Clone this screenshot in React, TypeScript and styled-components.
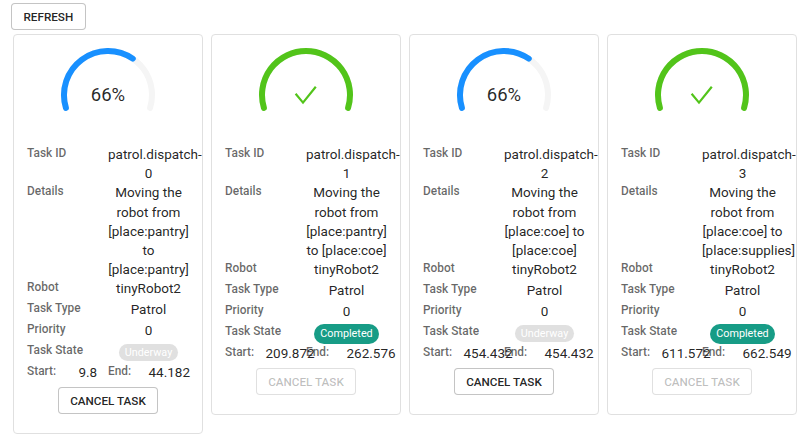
import styled, { createGlobalStyle } from "styled-components";

const GlobalStyle = createGlobalStyle`
  body {
    margin: 0;
    background: #fff;
    font-family: Roboto, "Liberation Sans", sans-serif;
  }
`;

const tasks = [
  {
    id: "patrol.dispatch-0",
    details: "Moving the robot from [place:pantry] to [place:pantry]",
    robot: "tinyRobot2",
    type: "Patrol",
    priority: 0,
    state: "Underway",
    progress: 66,
    start: "9.8",
    end: "44.182",
  },
  {
    id: "patrol.dispatch-1",
    details: "Moving the robot from [place:pantry] to [place:coe]",
    robot: "tinyRobot2",
    type: "Patrol",
    priority: 0,
    state: "Completed",
    progress: 100,
    start: "209.872",
    end: "262.576",
  },
  {
    id: "patrol.dispatch-2",
    details: "Moving the robot from [place:coe] to [place:coe]",
    robot: "tinyRobot2",
    type: "Patrol",
    priority: 0,
    state: "Underway",
    progress: 66,
    start: "454.432",
    end: "454.432",
  },
  {
    id: "patrol.dispatch-3",
    details: "Moving the robot from [place:coe] to [place:supplies]",
    robot: "tinyRobot2",
    type: "Patrol",
    priority: 0,
    state: "Completed",
    progress: 100,
    start: "611.572",
    end: "662.549",
  },
];

const Page = styled.div`
  padding: 3px 0 0 11px;
`;

const OutlinedButton = styled.button`
  height: 27px;
  padding: 0 11.5px;
  box-sizing: border-box;
  border: 1px solid rgba(0, 0, 0, 0.23);
  border-radius: 4px;
  background: #fff;
  color: rgba(0, 0, 0, 0.87);
  font-family: inherit;
  font-size: 11.7px;
  font-weight: 500;
  letter-spacing: 0;
  text-transform: uppercase;
  cursor: pointer;
  &:disabled {
    color: rgba(0, 0, 0, 0.26);
    border-color: rgba(0, 0, 0, 0.12);
    cursor: default;
  }
`;

const CardRow = styled.div`
  display: flex;
  align-items: flex-start;
  gap: 8px;
  margin: 4px 0 0 2px;
`;

const Card = styled.div`
  width: 190px;
  box-sizing: border-box;
  border: 1px solid #e0e0e0;
  border-radius: 4px;
  padding: 12px 13px 19px;
  display: flex;
  flex-direction: column;
`;

const GaugeBox = styled.div`
  position: relative;
  width: 96px;
  height: 96px;
  margin: 0 auto 2px;
`;

const GaugeText = styled.div`
  position: absolute;
  inset: 0;
  display: flex;
  align-items: center;
  justify-content: center;
  font-size: 18.5px;
  color: rgba(0, 0, 0, 0.85);
`;

const InfoRow = styled.div<{ $cols?: number }>`
  display: grid;
  grid-template-columns: repeat(${(p) => p.$cols ?? 2}, minmax(0, 1fr));
`;

const Label = styled.div`
  font-size: 11.9px;
  line-height: 16px;
  padding-bottom: 5px;
  font-weight: 500;
  color: rgba(0, 0, 0, 0.6);
`;

const Value = styled.div`
  font-size: 13.5px;
  line-height: 19.2px;
  text-align: center;
  color: rgba(0, 0, 0, 0.87);
`;

const Chip = styled.span<{ $done: boolean }>`
  display: inline-block;
  vertical-align: middle;
  height: ${(p) => (p.$done ? 20 : 17)}px;
  line-height: ${(p) => (p.$done ? 20 : 17)}px;
  padding: 0 6px;
  border-radius: 10px;
  font-size: 10.8px;
  color: #fff;
  background: ${(p) => (p.$done ? "#179c86" : "#e0e0e0")};
`;

const ButtonRow = styled.div`
  display: flex;
  justify-content: center;
  margin-top: 3px;
`;

const C = 48;
const R = 44;
const GAP = 146;
const START = 180 + GAP / 2;
const TOTAL = 360 - GAP;

const polar = (deg: number) => {
  const a = (deg * Math.PI) / 180;
  return [C + R * Math.sin(a), C - R * Math.cos(a)];
};

const arc = (from: number, to: number) => {
  const [x1, y1] = polar(from);
  const [x2, y2] = polar(to);
  const large = to - from > 180 ? 1 : 0;
  return `M ${x1} ${y1} A ${R} ${R} 0 ${large} 1 ${x2} ${y2}`;
};

const Gauge = ({ percent }: { percent: number }) => {
  const done = percent >= 100;
  return (
    <GaugeBox>
      <svg width="96" height="96" viewBox="0 0 96 96">
        <path d={arc(START, START + TOTAL)} fill="none" stroke="#f5f5f5" strokeWidth="6" strokeLinecap="round" />
        <path
          d={arc(START, START + (TOTAL * percent) / 100)}
          fill="none"
          stroke={done ? "#52c41a" : "#1890ff"}
          strokeWidth="6"
          strokeLinecap="round"
        />
        {done && <path d="M37.6 46.8 L45 55.6 L57.8 39.8" fill="none" stroke="#52c41a" strokeWidth="2.2" />}
      </svg>
      {!done && <GaugeText>{percent}%</GaugeText>}
    </GaugeBox>
  );
};

const App = () => (
  <Page>
    <GlobalStyle />
    <OutlinedButton>Refresh</OutlinedButton>
    <CardRow>
      {tasks.map((t) => {
        const done = t.state === "Completed";
        return (
          <Card key={t.id}>
            <Gauge percent={t.progress} />
            <InfoRow>
              <Label>Task ID</Label>
              <Value>{t.id}</Value>
            </InfoRow>
            <InfoRow>
              <Label>Details</Label>
              <Value>{t.details}</Value>
            </InfoRow>
            <InfoRow>
              <Label>Robot</Label>
              <Value>{t.robot}</Value>
            </InfoRow>
            <InfoRow>
              <Label>Task Type</Label>
              <Value>{t.type}</Value>
            </InfoRow>
            <InfoRow>
              <Label>Priority</Label>
              <Value>{t.priority}</Value>
            </InfoRow>
            <InfoRow>
              <Label>Task State</Label>
              <Value>
                <Chip $done={done}>{t.state}</Chip>
              </Value>
            </InfoRow>
            <InfoRow $cols={4}>
              <Label>Start:</Label>
              <Value>{t.start}</Value>
              <Label>End:</Label>
              <Value>{t.end}</Value>
            </InfoRow>
            <ButtonRow>
              <OutlinedButton disabled={done}>Cancel Task</OutlinedButton>
            </ButtonRow>
          </Card>
        );
      })}
    </CardRow>
  </Page>
);

export default App;
